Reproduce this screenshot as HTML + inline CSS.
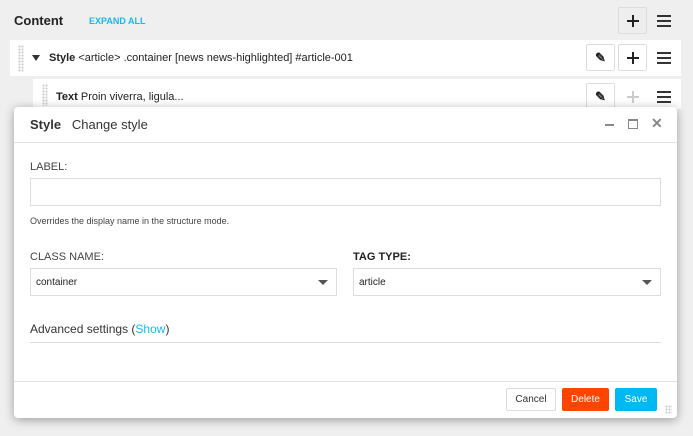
<!DOCTYPE html>
<html><head><style>
*{box-sizing:border-box;margin:0;padding:0}
body{width:693px;height:436px;background:#efefef;font-family:"Liberation Sans",sans-serif;position:relative;overflow:hidden;color:#222}
.a{position:absolute}
.btn{position:absolute;width:29px;height:27px;border:1px solid #ddd;background:#fff;border-radius:2px;display:flex;align-items:center;justify-content:center;font-size:20px;font-weight:bold;color:#222}
.plus{position:relative;width:12px;height:12px}
.plus:before{content:"";position:absolute;left:0;right:0;top:5px;height:2.5px;background:currentColor}
.plus:after{content:"";position:absolute;top:0;bottom:0;left:5px;width:2.5px;background:currentColor}
.ham{position:absolute;width:14px;height:12px;border-top:2px solid #333;border-bottom:2px solid #333}
.ham:after{content:"";position:absolute;left:0;right:0;top:3px;height:2px;background:#333}
.grip{position:absolute;width:6px;background-image:radial-gradient(#ccc 1px,transparent 1.2px);background-size:3px 3px}
.inp{position:absolute;border:1px solid #ddd;background:#fff;height:28px;font-size:11px;padding:0 5px;display:flex;align-items:center}
.caret{position:absolute;right:8px;top:11px;border-left:5px solid transparent;border-right:5px solid transparent;border-top:5px solid #555}
.lbl{position:absolute;font-size:11px;color:#444}
.fb{position:absolute;top:281px;height:23px;border-radius:2px}
.fb span{position:absolute;left:0;right:0;top:7px;font-size:10px;line-height:10px;text-align:center}
</style></head><body>
<div class="a" style="left:14px;top:13px;font-size:13px;font-weight:bold">Content</div>
<div class="a" style="left:89px;top:16px;font-size:9px;font-weight:bold;color:#1ab8ea">EXPAND ALL</div>
<div class="btn" style="left:618px;top:7px;background:#eee"><div class="plus"></div></div>
<div class="ham" style="left:657px;top:15px"></div>

<div class="a" style="left:10px;top:40px;width:671px;height:36px;background:#fff"></div>
<div class="grip" style="left:18px;top:45px;height:27px"></div>
<div class="a" style="left:32px;top:55px;border-left:4px solid transparent;border-right:4px solid transparent;border-top:6px solid #333"></div>
<div class="a" style="left:49px;top:52px;font-size:11px"><b>Style</b> &lt;article&gt; .container [news news-highlighted] #article-001</div>
<div class="btn" style="left:586px;top:44px;font-size:13px">✎</div>
<div class="btn" style="left:618px;top:44px"><div class="plus"></div></div>
<div class="ham" style="left:657px;top:52px"></div>

<div class="a" style="left:33px;top:79px;width:648px;height:30px;background:#fff"></div>
<div class="grip" style="left:42px;top:84px;height:22px"></div>
<div class="a" style="left:56px;top:91px;font-size:11px"><b>Text</b> Proin viverra, ligula...</div>
<div class="btn" style="left:586px;top:83px;font-size:13px">✎</div>
<div class="btn" style="left:618px;top:83px;color:#ccc;border-color:#fff"><div class="plus"></div></div>
<div class="ham" style="left:657px;top:91px"></div>

<div class="a" style="left:14px;top:107px;width:663px;height:311px;background:#fff;border-radius:4px;box-shadow:0 2px 10px rgba(0,0,0,.35)">
 <div class="a" style="left:16px;top:10px;font-size:13px;color:#333"><b>Style</b>&nbsp;&nbsp;&nbsp;Change style</div>
 <div class="a" style="left:591px;top:17px;width:9px;height:2px;background:#888"></div>
 <div class="a" style="left:614px;top:12px;width:10px;height:10px;border:1.5px solid #888;border-top-width:2px"></div>
 <div class="a" style="left:637px;top:8px;font-size:14px;color:#888;font-weight:bold">✕</div>
 <div class="a" style="left:0;top:35px;width:663px;height:1px;background:#e3e3e3"></div>
 <div class="lbl" style="left:16px;top:54px">LABEL:</div>
 <div class="inp" style="left:16px;top:71px;width:631px"></div>
 <div class="a" style="left:16px;top:109px;font-size:9px;color:#444">Overrides the display name in the structure mode.</div>
 <div class="lbl" style="left:16px;top:144px">CLASS NAME:</div>
 <div class="lbl" style="left:339px;top:144px;font-weight:bold;color:#222">TAG TYPE:</div>
 <div class="inp" style="left:16px;top:161px;width:307px;font-size:10px">container<div class="caret"></div></div>
 <div class="inp" style="left:339px;top:161px;width:308px;font-size:10px">article<div class="caret"></div></div>
 <div class="a" style="left:16px;top:215px;font-size:12px;color:#333">Advanced settings (<span style="color:#1ab8ea">Show</span>)</div>
 <div class="a" style="left:16px;top:235px;width:631px;height:1px;background:#ddd"></div>
 <div class="a" style="left:0;top:274px;width:663px;height:1px;background:#e3e3e3"></div>
 <div class="fb" style="left:492px;width:50px;border:1px solid #ddd;color:#333"><span style="top:6px">Cancel</span></div>
 <div class="fb" style="left:548px;width:47px;background:#ff4400;color:#fff"><span>Delete</span></div>
 <div class="fb" style="left:601px;width:42px;background:#00b9f2;color:#fff"><span>Save</span></div>
 <div class="grip" style="left:651px;top:298px;height:9px;width:7px"></div>
</div>
</body></html>
